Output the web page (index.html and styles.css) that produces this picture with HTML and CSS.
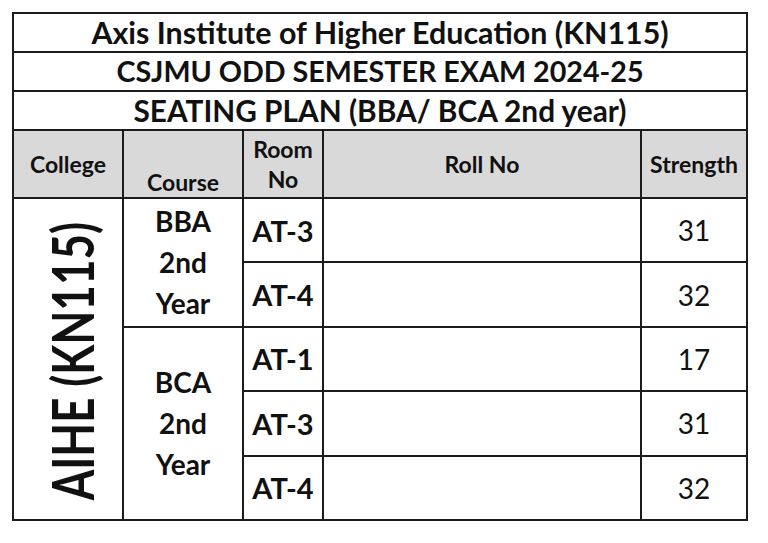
FILE: index.html
```html
<!DOCTYPE html>
<html>
<head>
<meta charset="utf-8">
<link rel="stylesheet" href="styles.css">
</head>
<body>
<table class="plan">
  <colgroup>
    <col class="c-college">
    <col class="c-course">
    <col class="c-room">
    <col class="c-roll">
    <col class="c-strength">
  </colgroup>
  <tr class="title t1"><td colspan="5">Axis Institute of Higher Education (KN115)</td></tr>
  <tr class="title t2"><td colspan="5">CSJMU ODD SEMESTER EXAM 2024-25</td></tr>
  <tr class="title t3"><td colspan="5">SEATING PLAN (BBA/ BCA 2nd year)</td></tr>
  <tr class="head">
    <th>College</th>
    <th class="bottom">Course</th>
    <th class="room">Room<br>No</th>
    <th>Roll No</th>
    <th>Strength</th>
  </tr>
  <tr class="data">
    <td rowspan="5" class="college"><span class="vert">AIHE (KN115)</span></td>
    <td rowspan="2" class="course">BBA<br>2nd<br>Year</td>
    <td class="roomno">AT-3</td>
    <td></td>
    <td class="num">31</td>
  </tr>
  <tr class="data">
    <td class="roomno">AT-4</td>
    <td></td>
    <td class="num">32</td>
  </tr>
  <tr class="data">
    <td rowspan="3" class="course">BCA<br>2nd<br>Year</td>
    <td class="roomno">AT-1</td>
    <td></td>
    <td class="num">17</td>
  </tr>
  <tr class="data">
    <td class="roomno">AT-3</td>
    <td></td>
    <td class="num">31</td>
  </tr>
  <tr class="data">
    <td class="roomno">AT-4</td>
    <td></td>
    <td class="num">32</td>
  </tr>
</table>
</body>
</html>
```
FILE: styles.css
```css
html, body {
  margin: 0;
  padding: 0;
  background: #ffffff;
}
body {
  padding: 12px 0 0 12px;
  font-family: Lato, "Liberation Sans", sans-serif;
  color: #111;
}
.plan {
  border-collapse: collapse;
  table-layout: fixed;
  width: 736px;
  border: 2px solid #1c1c1c;
}
.plan td, .plan th {
  border: 2px solid #1c1c1c;
  padding: 0;
  text-align: center;
  vertical-align: middle;
}
.c-college { width: 110px; }
.c-course { width: 120px; }
.c-room { width: 80px; }
.c-roll { width: 318px; }
.c-strength { width: 106px; }

.title td {
  height: 37px;
  font-size: 29px;
  font-weight: 700;
  line-height: 1;
}
.t1 td { font-size: 30.4px; }
.t2 td { font-size: 28.7px; }
.t3 td { font-size: 29.8px; }
.head th {
  height: 66px;
  background: #d9d9d9;
  font-size: 23px;
  font-weight: 700;
  line-height: 30px;
}
.head th.bottom {
  vertical-align: bottom;
  padding-bottom: 0;
}
.data td {
  height: 62.4px;
}
.course {
  font-size: 28px;
  font-weight: 700;
  line-height: 41px;
}
.roomno {
  font-size: 29px;
  font-weight: 700;
}
.num {
  font-size: 28px;
  font-weight: 400;
}
.vert {
  display: inline-block;
  writing-mode: vertical-rl;
  transform: translate(4px, 4px) rotate(180deg) scaleX(1.3);
  font-size: 44px;
  font-weight: 700;
  line-height: 1;
  white-space: nowrap;
}
```
